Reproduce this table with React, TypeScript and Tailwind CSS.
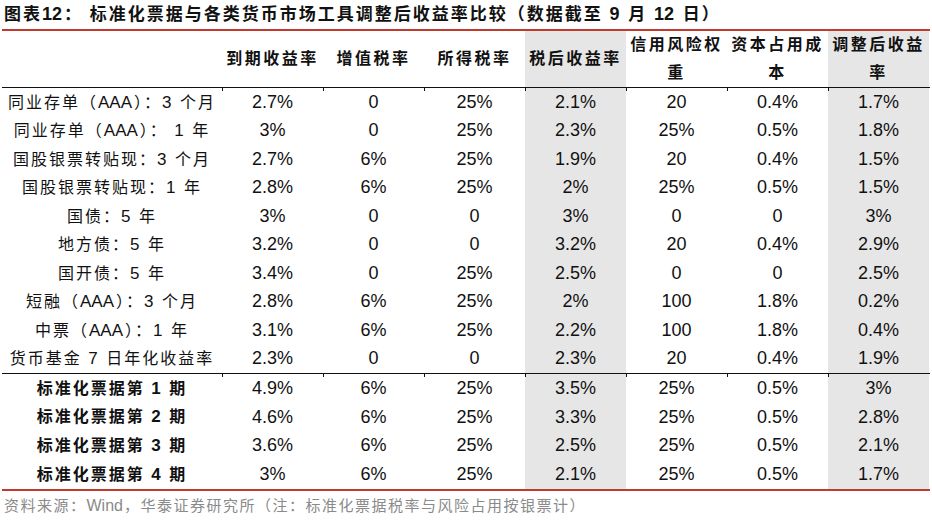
import React from 'react';

const cols = ['到期收益率', '增值税率', '所得税率', '税后收益率', '信用风险权|重', '资本占用成|本', '调整后收益|率'];

const plainRows: string[][] = [
  ['同业存单（AAA）：3 个月', '2.7%', '0', '25%', '2.1%', '20', '0.4%', '1.7%'],
  ['同业存单（AAA）： 1 年', '3%', '0', '25%', '2.3%', '25%', '0.5%', '1.8%'],
  ['国股银票转贴现：3 个月', '2.7%', '6%', '25%', '1.9%', '20', '0.4%', '1.5%'],
  ['国股银票转贴现：1 年', '2.8%', '6%', '25%', '2%', '25%', '0.5%', '1.5%'],
  ['国债：5 年', '3%', '0', '0', '3%', '0', '0', '3%'],
  ['地方债：5 年', '3.2%', '0', '0', '3.2%', '20', '0.4%', '2.9%'],
  ['国开债：5 年', '3.4%', '0', '25%', '2.5%', '0', '0', '2.5%'],
  ['短融（AAA）：3 个月', '2.8%', '6%', '25%', '2%', '100', '1.8%', '0.2%'],
  ['中票（AAA）：1 年', '3.1%', '6%', '25%', '2.2%', '100', '1.8%', '0.4%'],
  ['货币基金 7 日年化收益率', '2.3%', '0', '0', '2.3%', '20', '0.4%', '1.9%'],
];

const billRows: string[][] = [
  ['标准化票据第 1 期', '4.9%', '6%', '25%', '3.5%', '25%', '0.5%', '3%'],
  ['标准化票据第 2 期', '4.6%', '6%', '25%', '3.3%', '25%', '0.5%', '2.8%'],
  ['标准化票据第 3 期', '3.6%', '6%', '25%', '2.5%', '25%', '0.5%', '2.1%'],
  ['标准化票据第 4 期', '3%', '6%', '25%', '2.1%', '25%', '0.5%', '1.7%'],
];

const shaded = (i: number) => i === 4 || i === 7;

// latin runs (AAA, digits, Wind) keep normal spacing, CJK gets the wide tracking
function Mixed({ text, latin }: { text: string; latin: string }) {
  const parts = text.split(/([A-Za-z0-9.]+)/);
  return (
    <>
      {parts.map((p, i) =>
        /^[A-Za-z0-9.]+$/.test(p) ? (
          <span key={i} className={`tracking-normal ${latin}`}>
            {p}
          </span>
        ) : (
          <span key={i}>{p}</span>
        )
      )}
    </>
  );
}

function Row({ cells, bold, first, h }: { cells: string[]; bold?: boolean; first?: boolean; h: string }) {
  return (
    <>
      {cells.map((c, i) => (
        <div
          key={i}
          className={`relative flex items-center justify-center ${h} ${shaded(i) ? 'bg-[#e6e6e6]' : ''} ${
            i === 0 ? `text-[16px] tracking-[2px] ${bold ? 'font-bold' : ''}` : 'text-[18px]'
          }`}
        >
          {first && i > 0 && <span className="absolute left-0 top-0 h-[3px] w-px bg-[#111]" />}
          <span className="whitespace-pre">
            {i === 0 ? <Mixed text={c} latin="text-[17px] mr-[2px]" /> : c}
          </span>
        </div>
      ))}
    </>
  );
}

export default function App() {
  return (
    <div
      className="w-[932px] h-[520px] bg-white text-[#111] overflow-hidden"
      style={{ fontFamily: '"Liberation Sans", "Noto Sans CJK SC", sans-serif' }}
    >
      <div className="h-[29px] pl-[4px] flex items-center text-[17px] font-bold tracking-[2px] whitespace-pre">
        <Mixed text="图表12： 标准化票据与各类货币市场工具调整后收益率比较（数据截至 9 月 12 日）" latin="text-[18px] mr-[2px]" />
      </div>
      <div className="ml-[2px] w-[928px] border-t-2 border-[#c23a2e]">
        <div className="grid grid-cols-[220px_repeat(7,101px)]">
          <div className="h-[56px]" />
          {cols.map((c, i) => (
            <div
              key={c}
              className={`h-[56px] flex flex-col items-center justify-center text-[16px] font-bold tracking-[2.5px] leading-[28px] ${
                shaded(i + 1) ? 'bg-[#e6e6e6]' : ''
              }`}
            >
              {c.split('|').map((p) => (
                <span key={p}>{p}</span>
              ))}
            </div>
          ))}
        </div>
        <div className="grid grid-cols-[220px_repeat(7,101px)] border-t border-[#111]">
          {plainRows.map((r, i) => (
            <Row key={i} cells={r} first={i === 0} h="h-[28.5px]" />
          ))}
        </div>
        <div className="grid grid-cols-[220px_repeat(7,101px)] border-t border-[#111] border-b-2 border-b-[#c23a2e]">
          {billRows.map((r, i) => (
            <Row key={i} cells={r} bold first={i === 0} h="h-[28.75px]" />
          ))}
        </div>
      </div>
      <div className="pl-[4px] h-[30px] flex items-center text-[15px] tracking-[1.5px] text-[#8a8a8a] whitespace-pre">
        <Mixed text="资料来源：Wind，华泰证券研究所（注：标准化票据税率与风险占用按银票计）" latin="text-[16px] mr-[1px]" />
      </div>
    </div>
  );
}
